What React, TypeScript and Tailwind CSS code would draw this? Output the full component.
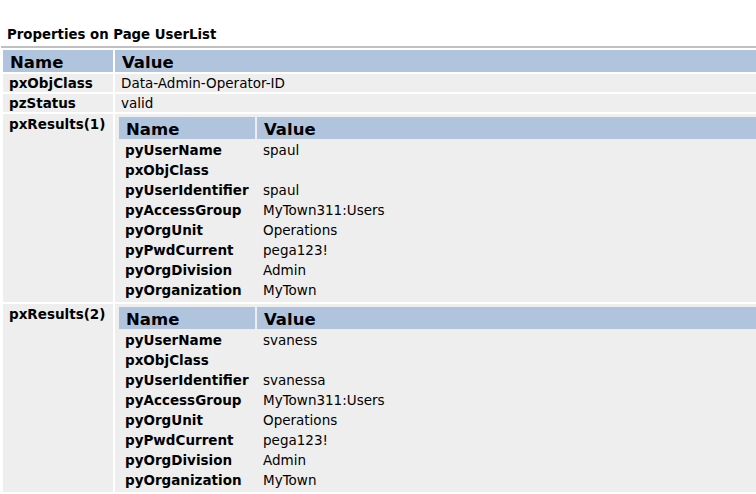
const results = [
  [
    ['pyUserName', 'spaul'],
    ['pxObjClass', ''],
    ['pyUserIdentifier', 'spaul'],
    ['pyAccessGroup', 'MyTown311:Users'],
    ['pyOrgUnit', 'Operations'],
    ['pyPwdCurrent', 'pega123!'],
    ['pyOrgDivision', 'Admin'],
    ['pyOrganization', 'MyTown'],
  ],
  [
    ['pyUserName', 'svaness'],
    ['pxObjClass', ''],
    ['pyUserIdentifier', 'svanessa'],
    ['pyAccessGroup', 'MyTown311:Users'],
    ['pyOrgUnit', 'Operations'],
    ['pyPwdCurrent', 'pega123!'],
    ['pyOrgDivision', 'Admin'],
    ['pyOrganization', 'MyTown'],
  ],
]

function HeaderRow() {
  return (
    <tr>
      <th className="h-[22px] bg-[#b0c4de] pl-[7px] pt-[3px] text-left align-top text-[16.5px] leading-[19px] font-bold">Name</th>
      <th className="h-[22px] bg-[#b0c4de] pl-[7px] pt-[3px] text-left align-top text-[16.5px] leading-[19px] font-bold">Value</th>
    </tr>
  )
}

function Nested({ rows }: { rows: string[][] }) {
  return (
    <table className="w-full table-fixed border-separate border-spacing-[2px]">
      <colgroup>
        <col className="w-[136px]" />
        <col />
      </colgroup>
      <thead>
        <HeaderRow />
      </thead>
      <tbody>
        {rows.map(([name, value]) => (
          <tr key={name}>
            <td className="h-[18px] px-[6px] font-bold leading-[18px] whitespace-nowrap">{name}</td>
            <td className="h-[18px] px-[6px] leading-[18px] whitespace-nowrap">{value}</td>
          </tr>
        ))}
      </tbody>
    </table>
  )
}

export default function App() {
  return (
    <div className="w-[756px] h-[494px] overflow-hidden bg-white text-black text-[13.5px] font-['DejaVu_Sans',Verdana,sans-serif]">
      <div className="w-[840px] pl-[1px] pt-[27px]">
        <div className="h-[15px] pl-[6px] text-[13.3px] font-bold leading-[15px]">Properties on Page UserList</div>
        <div className="mt-[4px] h-[2px] bg-[#c0c0c0]" />
        <table className="w-full table-fixed border-separate border-spacing-[2px]">
          <colgroup>
            <col className="w-[110px]" />
            <col />
          </colgroup>
          <thead>
            <HeaderRow />
          </thead>
          <tbody>
            <tr>
              <td className="h-[18px] bg-[#eeeeee] px-[6px] font-bold leading-[18px]">pxObjClass</td>
              <td className="h-[18px] bg-[#eeeeee] px-[6px] leading-[18px]">Data-Admin-Operator-ID</td>
            </tr>
            <tr>
              <td className="h-[18px] bg-[#eeeeee] px-[6px] font-bold leading-[18px]">pzStatus</td>
              <td className="h-[18px] bg-[#eeeeee] px-[6px] leading-[18px]">valid</td>
            </tr>
            {results.map((rows, i) => (
              <tr key={i}>
                <td className="bg-[#eeeeee] px-[6px] pt-[1px] align-top font-bold leading-[18px] whitespace-nowrap">pxResults({i + 1})</td>
                <td className="bg-[#eeeeee] pl-[2px] pt-[1px] pb-[1px] align-top">
                  <Nested rows={rows} />
                </td>
              </tr>
            ))}
          </tbody>
        </table>
      </div>
    </div>
  )
}
